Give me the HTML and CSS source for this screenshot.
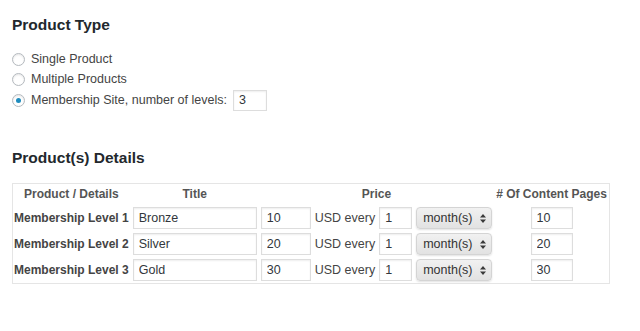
FILE: index.html
```html
<!DOCTYPE html>
<html lang="en">

<head>
  <meta charset="UTF-8" />
  <title>Product Type</title>
  <link rel="stylesheet" href="styles.css">
</head>

<body>
  <h2>Product Type</h2>
  <div class="types">
    <label class="type"><input type="radio" name="ptype" /><span>Single Product</span></label>
    <label class="type"><input type="radio" name="ptype" /><span>Multiple Products</span></label>
    <label class="type type-last"><input type="radio" name="ptype" checked /><span>Membership Site, number of levels:</span><input type="text" class="field levels" value="3" /></label>
  </div>

  <h2 class="details-title">Product(s) Details</h2>
  <table class="details">
    <thead>
      <tr>
        <th class="name-head">Product / Details</th>
        <th>Title</th>
        <th colspan="4">Price</th>
        <th># Of Content Pages</th>
      </tr>
    </thead>
    <tbody>
      <tr>
        <td class="name">Membership Level 1</td>
        <td><input type="text" class="field title" value="Bronze" /></td>
        <td><input type="text" class="field price" value="10" /></td>
        <td class="every">USD every</td>
        <td><input type="text" class="field period" value="1" /></td>
        <td>
          <span class="select">
            <select><option>month(s)</option><option>year(s)</option></select>
            <svg width="6" height="9" viewBox="0 0 6 9"><path d="M3 0 6 3.4H0Z M3 9 6 5.6H0Z" fill="#3a3a3a" /></svg>
          </span>
        </td>
        <td class="pages"><input type="text" class="field count" value="10" /></td>
      </tr>
      <tr>
        <td class="name">Membership Level 2</td>
        <td><input type="text" class="field title" value="Silver" /></td>
        <td><input type="text" class="field price" value="20" /></td>
        <td class="every">USD every</td>
        <td><input type="text" class="field period" value="1" /></td>
        <td>
          <span class="select">
            <select><option>month(s)</option><option>year(s)</option></select>
            <svg width="6" height="9" viewBox="0 0 6 9"><path d="M3 0 6 3.4H0Z M3 9 6 5.6H0Z" fill="#3a3a3a" /></svg>
          </span>
        </td>
        <td class="pages"><input type="text" class="field count" value="20" /></td>
      </tr>
      <tr>
        <td class="name">Membership Level 3</td>
        <td><input type="text" class="field title" value="Gold" /></td>
        <td><input type="text" class="field price" value="30" /></td>
        <td class="every">USD every</td>
        <td><input type="text" class="field period" value="1" /></td>
        <td>
          <span class="select">
            <select><option>month(s)</option><option>year(s)</option></select>
            <svg width="6" height="9" viewBox="0 0 6 9"><path d="M3 0 6 3.4H0Z M3 9 6 5.6H0Z" fill="#3a3a3a" /></svg>
          </span>
        </td>
        <td class="pages"><input type="text" class="field count" value="30" /></td>
      </tr>
    </tbody>
  </table>
</body>

</html>
```

FILE: styles.css
```css
body {
  margin: 0;
  padding: 0 12px;
  background-color: #fff;
  color: #444;
  font-family: "Liberation Sans", Arial, sans-serif;
  font-size: 12.5px;
}

h2 {
  margin: 15px 0 14px;
  font-size: 15.5px;
  line-height: 20px;
  color: #23282d;
}

.details-title {
  margin-top: 38px;
  margin-bottom: 15px;
}

/* product type radios */
.types {
  display: flex;
  flex-direction: column;
}

.type {
  display: flex;
  align-items: center;
  gap: 6px;
  height: 20px;
  line-height: 20px;
}

.type-last {
  margin-top: 1px;
}

.type input[type="radio"] {
  appearance: none;
  -webkit-appearance: none;
  display: grid;
  place-items: center;
  width: 13px;
  height: 13px;
  margin: 0;
  border: 1px solid #b4b9be;
  border-radius: 50%;
  background-color: #fff;
  box-shadow: inset 0 1px 2px rgba(0, 0, 0, 0.1);
  box-sizing: border-box;
}

.type input[type="radio"]:checked::before {
  content: "";
  width: 5px;
  height: 5px;
  border-radius: 50%;
  background-color: #1e8cbe;
}

.field {
  display: block;
  height: 22px;
  margin: 0;
  padding: 0 5px;
  box-sizing: border-box;
  border: 1px solid #ddd;
  border-radius: 0;
  box-shadow: inset 0 1px 2px rgba(0, 0, 0, 0.07);
  background-color: #fff;
  color: #32373c;
  font-family: inherit;
  font-size: 12.5px;
  outline: none;
}

.levels {
  width: 34px;
  height: 21px;
}

/* details table */
.details {
  border-collapse: separate;
  border-spacing: 0;
  border: 1px solid #e5e5e5;
}

.details th {
  padding: 2px;
  line-height: 17px;
  font-size: 12px;
  color: #555;
  text-align: center;
  white-space: nowrap;
}

.details td {
  padding: 2px;
  vertical-align: middle;
  white-space: nowrap;
}

.details .name-head,
.details .name {
  padding-left: 1px;
}

.details .name {
  font-size: 12px;
  font-weight: bold;
  color: #444;
}

.title {
  width: 124px;
}

.price {
  width: 50px;
}

.period {
  width: 33px;
}

.count {
  width: 42px;
  margin: 0 auto;
}

.select {
  position: relative;
  display: block;
  width: 76px;
}

.select select {
  appearance: none;
  -webkit-appearance: none;
  display: block;
  width: 100%;
  height: 22px;
  margin: 0;
  padding: 0 14px 0 6px;
  border: 1px solid #d4d4d4;
  border-radius: 4px;
  background: linear-gradient(#f1f1f1, #e2e2e2);
  box-shadow: 0 1px 2px rgba(0, 0, 0, 0.12);
  color: #333;
  font-family: inherit;
  font-size: 12.5px;
  outline: none;
}

.select svg {
  position: absolute;
  top: 7px;
  right: 6px;
  pointer-events: none;
}
```
